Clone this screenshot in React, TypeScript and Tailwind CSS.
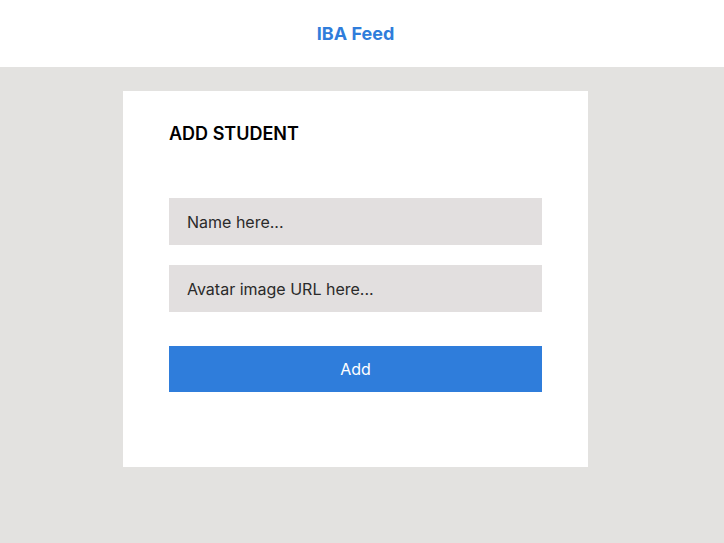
export default function App() {
  return (
    <div className="min-h-[543px] bg-[#e3e2e0] font-['Inter',sans-serif]">
      <header className="h-[67px] bg-white flex items-center justify-center pr-[13px]">
        <h1 className="text-[18px] font-bold text-[#2f7ddb] leading-none">IBA Feed</h1>
      </header>
      <div className="flex justify-center pt-6 pr-[13px]">
        <div className="w-[465px] h-[376px] bg-white px-[46px] pt-[31px]">
          <h2 className="text-[18px] font-semibold text-black leading-[24px]">ADD STUDENT</h2>
          <div className="mt-[52px] flex flex-col gap-5">
            <input
              className="h-[47px] bg-[#e2dfdf] px-[18px] text-[16px] text-[#2a2a2a] placeholder:text-[#2a2a2a] outline-none"
              placeholder="Name here..."
            />
            <input
              className="h-[47px] bg-[#e2dfdf] px-[18px] text-[16px] text-[#2a2a2a] placeholder:text-[#2a2a2a] outline-none"
              placeholder="Avatar image URL here..."
            />
          </div>
          <button className="mt-[34px] w-full h-[46px] bg-[#2f7ddb] text-white text-[16px]">Add</button>
        </div>
      </div>
    </div>
  );
}
